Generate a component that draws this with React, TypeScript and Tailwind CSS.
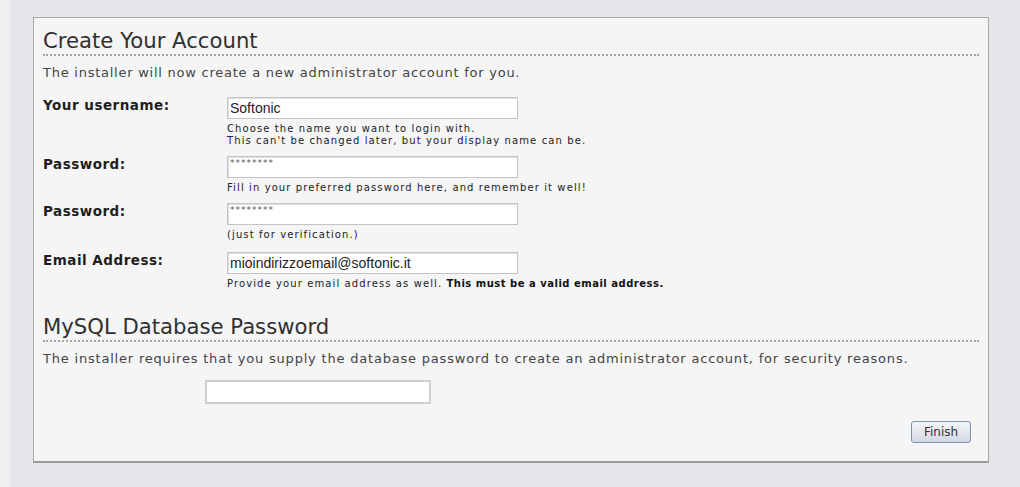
import React from "react";

const rows = [
  {
    label: "Your username:",
    value: "Softonic",
    masked: false,
    gap: "mb-[9px]",
    help: [
      "Choose the name you want to login with.",
      "This can't be changed later, but your display name can be.",
    ],
  },
  {
    label: "Password:",
    value: "********",
    masked: true,
    gap: "mb-[9px]",
    help: ["Fill in your preferred password here, and remember it well!"],
  },
  {
    label: "Password:",
    value: "********",
    masked: true,
    gap: "mb-[11px]",
    help: ["(just for verification.)"],
  },
];

function Field({ value, masked }: { value: string; masked: boolean }) {
  return (
    <div className="w-[291px] h-[22px] bg-white border border-[#c4c4c4] shadow-[inset_1px_1px_0_#e2e2e2] flex items-start px-[2px]">
      {masked ? (
        <span className="text-[9px] leading-[12px] tracking-[1px] text-[#555] font-['DejaVu_Sans',sans-serif]">
          {value}
        </span>
      ) : (
        <span className="text-[14px] leading-[20px] text-[#222] font-['Liberation_Sans',Arial,sans-serif]">
          {value}
        </span>
      )}
    </div>
  );
}

function Heading({ children }: { children: React.ReactNode }) {
  return (
    <div className="border-b-2 border-dotted border-[#a5a5a5] pb-[1px]">
      <h2 className="text-[21.2px] leading-[25px] text-[#303030]">{children}</h2>
    </div>
  );
}

function Label({ children }: { children: React.ReactNode }) {
  return (
    <div className="w-[184px] pt-[1px] text-[13.5px] leading-[15px] tracking-[0.5px] font-bold text-[#1e1e1e]">
      {children}
    </div>
  );
}

export default function App() {
  return (
    <div className="w-[1020px] h-[487px] bg-[linear-gradient(to_right,#efeff1_0,#efeff1_8px,#e6e6ea_12px)] pt-[17px] pl-[33px] font-['DejaVu_Sans',Verdana,sans-serif]">
      <div className="w-[956px] h-[446px] bg-[#f5f5f5] border border-[#a9a9a9] border-b-2 border-b-[#9c9c9c] px-[9px] pt-[10px] flex flex-col">
        <Heading>Create Your Account</Heading>
        <p className="text-[13px] leading-[16px] tracking-[0.75px] text-[#444] mt-[9px]">
          The installer will now create a new administrator account for you.
        </p>

        <div className="mt-[16px] flex flex-col">
          {rows.map((r, i) => (
            <div key={i} className={"flex items-start " + r.gap}>
              <Label>{r.label}</Label>
              <div className="flex flex-col">
                <Field value={r.value} masked={r.masked} />
                <div className="mt-[4px] text-[10px] leading-[12px] tracking-[1.1px] text-[#222]">
                  {r.help.map((h) => (
                    <div key={h}>{h}</div>
                  ))}
                </div>
              </div>
            </div>
          ))}
          <div className="flex items-start">
            <Label>Email Address:</Label>
            <div className="flex flex-col">
              <Field value="mioindirizzoemail@softonic.it" masked={false} />
              <div className="mt-[4px] text-[10px] leading-[12px] tracking-[1.1px] text-[#222] whitespace-nowrap">
                Provide your email address as well.{" "}
                <b className="text-[#111] tracking-[0.5px]">This must be a valid email address.</b>
              </div>
            </div>
          </div>
        </div>

        <div className="mt-[24px]">
          <Heading>MySQL Database Password</Heading>
        </div>
        <p className="text-[13px] leading-[16px] tracking-[0.8px] text-[#444] mt-[9px] whitespace-nowrap">
          The installer requires that you supply the database password to create an administrator account, for
          security reasons.
        </p>
        <div className="mt-[13px] pl-[162px]">
          <div className="w-[226px] h-[24px] bg-white border-2 border-[#cfcfcf]" />
        </div>
        <div className="flex justify-end mt-[17px] pr-[8px]">
          <button className="w-[60px] h-[22px] rounded-[3px] border border-[#7f95b5] bg-[linear-gradient(#f3f5f8,#d3d9e3)] text-[12px] leading-[18px] text-[#333] font-['DejaVu_Sans',sans-serif]">
            Finish
          </button>
        </div>
      </div>
    </div>
  );
}
